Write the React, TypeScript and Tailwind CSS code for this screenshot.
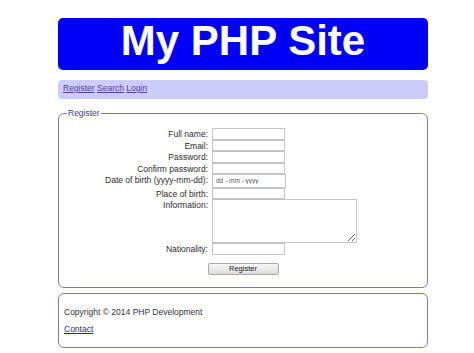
const rows: { label: string; h: string; date?: boolean; area?: boolean }[] = [
  { label: "Full name:", h: "h-[11.5px]" },
  { label: "Email:", h: "h-[11.5px]" },
  { label: "Password:", h: "h-[11.5px]" },
  { label: "Confirm password:", h: "h-[11.5px]" },
  { label: "Date of birth (yyyy-mm-dd):", h: "h-[13.5px]", date: true },
  { label: "Place of birth:", h: "h-[11.5px]" },
  { label: "Information:", h: "h-[44px]", area: true },
  { label: "Nationality:", h: "h-[12px]" },
];

function Field({ row }: { row: (typeof rows)[number] }) {
  if (row.area) {
    return (
      <textarea
        className="block w-[145px] h-[44px] p-0 border border-[#c4c4c4] bg-white outline-none"
        readOnly
      />
    );
  }
  if (row.date) {
    return (
      <input
        type="text"
        readOnly
        defaultValue="dd - mm - yyyy"
        className="block w-[74px] h-[13.5px] border border-[#c4c4c4] bg-white px-[3px] py-0 text-[6.5px] text-[#555] outline-none"
      />
    );
  }
  return (
    <input
      type="text"
      readOnly
      className={`block w-[73px] ${row.h} p-0 border border-[#c4c4c4] bg-white outline-none`}
    />
  );
}

export default function App() {
  return (
    <div
      className="w-[474px] h-[353px] bg-white overflow-hidden"
      style={{ fontFamily: '"Liberation Sans", Arial, sans-serif' }}
    >
      <div className="ml-[58px] w-[370px] pt-[18px]">
        <div className="h-[52px] bg-[#0000f8] rounded-[5px] flex justify-center pt-[2px]">
          <h1 className="text-white font-bold text-[42px] leading-none">My PHP Site</h1>
        </div>

        <nav className="mt-[10px] h-[19px] bg-[#ccccfb] rounded-[4px] pl-[5px] text-[8.5px] leading-[16px] text-[#54409a]">
          <a href="#" className="underline">Register</a>{" "}
          <a href="#" className="underline">Search</a>{" "}
          <a href="#" className="underline">Login</a>
        </nav>

        <fieldset className="mt-[8px] border-[1.5px] border-[#7d79b3] rounded-[6px] px-[8px] pt-[9px] pb-[12px]">
          <legend className="text-[8.5px] text-[#3d3b8c] px-[1px] leading-[12px]">Register</legend>
          <div className="flex flex-col">
            {rows.map((row) => (
              <div key={row.label} className="flex items-start">
                <label className="w-[141px] translate-y-[1px] text-right text-[8.5px] leading-[11.5px] text-[#2a2a2a]">
                  {row.label}
                </label>
                <div className="ml-[4px] flex">
                  <Field row={row} />
                </div>
              </div>
            ))}
          </div>
          <div className="flex justify-center mt-[8px]">
            <button className="w-[71px] h-[12px] border border-[#a9a9a9] rounded-[2px] bg-gradient-to-b from-[#f6f6f6] to-[#dddddd] text-[7.5px] leading-none text-[#222]">
              Register
            </button>
          </div>
        </fieldset>

        <footer className="mt-[5px] h-[55px] border-[1.5px] border-[#7d79b3] rounded-[6px] px-[5px] pt-[12px] text-[8.5px] leading-[12px] text-[#333]">
          <p>Copyright © 2014 PHP Development</p>
          <p className="mt-[5px]">
            <a href="#" className="underline text-[#2b2a9c]">Contact</a>
          </p>
        </footer>
      </div>
    </div>
  );
}
